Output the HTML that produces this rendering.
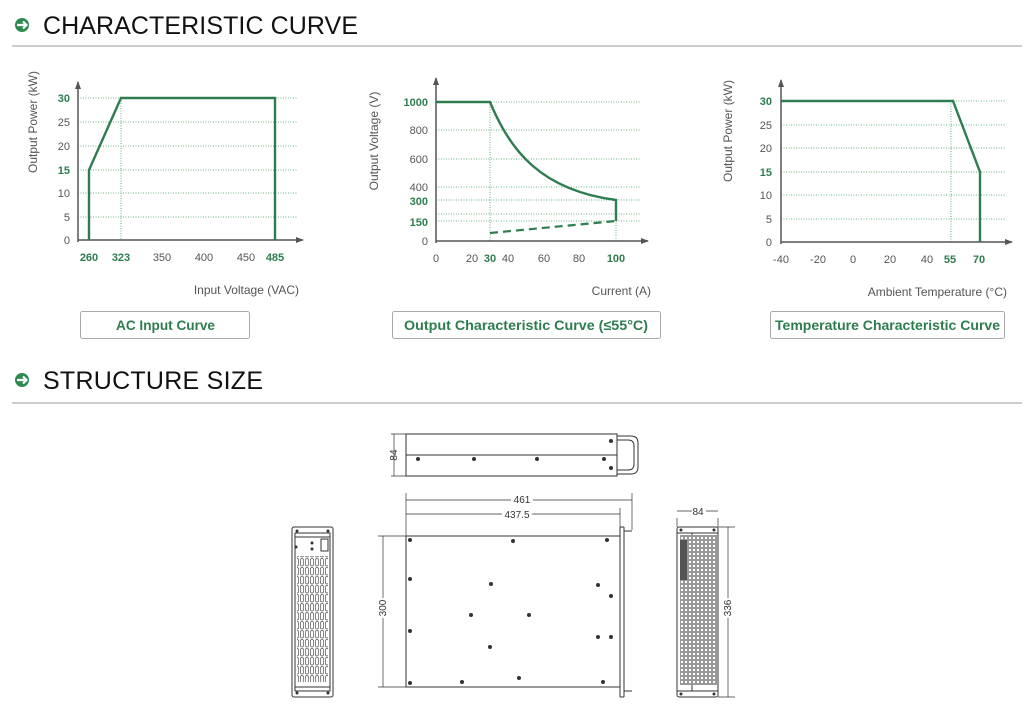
<!DOCTYPE html>
<html><head><meta charset="utf-8"><style>
html,body{margin:0;padding:0;background:#fff;}
svg{display:block;font-family:"Liberation Sans",sans-serif;}
</style></head><body>
<svg width="1031" height="716" viewBox="0 0 1031 716" xmlns="http://www.w3.org/2000/svg">
<defs>
<pattern id="vent" x="0" y="0" width="5" height="9" patternUnits="userSpaceOnUse">
<rect x="0.5" y="0.5" width="3" height="7.5" rx="1.5" fill="none" stroke="#555" stroke-width="0.7"/>
</pattern>
<pattern id="grid" x="0" y="0" width="4" height="4" patternUnits="userSpaceOnUse">
<rect x="0.5" y="0.5" width="3" height="3" fill="none" stroke="#555" stroke-width="0.6"/>
</pattern>
<marker id="ar" markerWidth="8" markerHeight="8" refX="7" refY="4" orient="auto" markerUnits="userSpaceOnUse"><path d="M0,1 L8,4 L0,7 Z" fill="#555"/></marker>
</defs>

<!-- Header 1 -->
<circle cx="22" cy="25" r="7" fill="#2f8a4f"/>
<path d="M17,25 H26 M23,21.5 L26.5,25 L23,28.5" stroke="#fff" stroke-width="2.2" fill="none"/>
<text x="43" y="34" font-size="25" textLength="315" lengthAdjust="spacing" fill="#111">CHARACTERISTIC CURVE</text>
<rect x="12" y="45" width="1010" height="2" fill="#ccc"/>

<!-- Chart 1 -->
<g stroke="#3a9a5a" stroke-width="0.8" stroke-dasharray="1,1.5" fill="none">
<path d="M78,98H297 M78,122H297 M78,146H297 M78,170H297 M78,193H297 M78,217H297 M121,98V240"/>
</g>
<path d="M78,242V82" stroke="#555" stroke-width="1.5" marker-end="url(#ar)"/>
<path d="M78,240H303" stroke="#555" stroke-width="1.5" marker-end="url(#ar)"/>
<path d="M89,240V170L121,98H275V240" stroke="#2e7d4f" stroke-width="2.4" fill="none"/>
<g font-size="11" text-anchor="end" fill="#555">
<text x="70" y="102" fill="#2e7d4f" font-weight="bold">30</text><text x="70" y="126">25</text><text x="70" y="150">20</text>
<text x="70" y="174" fill="#2e7d4f" font-weight="bold">15</text><text x="70" y="197">10</text><text x="70" y="221">5</text><text x="70" y="244">0</text>
</g>
<g font-size="11" text-anchor="middle" fill="#555">
<text x="89" y="261" fill="#2e7d4f" font-weight="bold">260</text><text x="121" y="261" fill="#2e7d4f" font-weight="bold">323</text>
<text x="162" y="261">350</text><text x="204" y="261">400</text><text x="246" y="261">450</text>
<text x="275" y="261" fill="#2e7d4f" font-weight="bold">485</text>
</g>
<text transform="translate(37,122) rotate(-90)" font-size="12" text-anchor="middle" fill="#555">Output Power (kW)</text>
<text x="299" y="294" font-size="12" text-anchor="end" fill="#555">Input Voltage (VAC)</text>
<rect x="80.5" y="311.5" width="169" height="27" rx="2" fill="#fff" stroke="#aaa"/>
<text x="116" y="330" font-size="14" font-weight="bold" textLength="99" lengthAdjust="spacingAndGlyphs" fill="#2e7d4f">AC Input Curve</text>

<!-- Chart 2 -->
<g stroke="#3a9a5a" stroke-width="0.8" stroke-dasharray="1,1.5" fill="none">
<path d="M436,102H640 M436,130H640 M436,159H640 M436,187H640 M436,200H640 M436,214H640 M436,221H640 M490,102V241 M616,200V241"/>
</g>
<path d="M436,243V78" stroke="#555" stroke-width="1.5" marker-end="url(#ar)"/>
<path d="M436,241H648" stroke="#555" stroke-width="1.5" marker-end="url(#ar)"/>
<path d="M436,102H490C510,150 540,190 616,200V221" stroke="#2e7d4f" stroke-width="2.4" fill="none"/>
<path d="M490,233L616,221" stroke="#2e7d4f" stroke-width="2.2" stroke-dasharray="8,5" fill="none"/>
<g font-size="11" text-anchor="end" fill="#555">
<text x="428" y="106" fill="#2e7d4f" font-weight="bold">1000</text><text x="428" y="134">800</text><text x="428" y="163">600</text>
<text x="428" y="191">400</text><text x="428" y="205" fill="#2e7d4f" font-weight="bold">300</text>
<text x="428" y="226" fill="#2e7d4f" font-weight="bold">150</text><text x="428" y="245">0</text>
</g>
<g font-size="11" text-anchor="middle" fill="#555">
<text x="436" y="262">0</text><text x="472" y="262">20</text><text x="490" y="262" fill="#2e7d4f" font-weight="bold">30</text>
<text x="508" y="262">40</text><text x="544" y="262">60</text><text x="579" y="262">80</text>
<text x="616" y="262" fill="#2e7d4f" font-weight="bold">100</text>
</g>
<text transform="translate(378,141) rotate(-90)" font-size="12" text-anchor="middle" fill="#555">Output Voltage (V)</text>
<text x="651" y="295" font-size="12" text-anchor="end" fill="#555">Current (A)</text>
<rect x="392.5" y="311.5" width="268" height="27" rx="2" fill="#fff" stroke="#aaa"/>
<text x="404" y="330" font-size="14" font-weight="bold" textLength="244" lengthAdjust="spacingAndGlyphs" fill="#2e7d4f">Output Characteristic Curve (≤55°C)</text>

<!-- Chart 3 -->
<g stroke="#3a9a5a" stroke-width="0.8" stroke-dasharray="1,1.5" fill="none">
<path d="M781,101H1005 M781,125H1005 M781,148H1005 M781,172H1005 M781,195H1005 M781,219H1005 M951,101V242"/>
</g>
<path d="M781,244V80" stroke="#555" stroke-width="1.5" marker-end="url(#ar)"/>
<path d="M781,242H1012" stroke="#555" stroke-width="1.5" marker-end="url(#ar)"/>
<path d="M781,101H953L980,172V242" stroke="#2e7d4f" stroke-width="2.4" fill="none"/>
<g font-size="11" text-anchor="end" fill="#555">
<text x="772" y="105" fill="#2e7d4f" font-weight="bold">30</text><text x="772" y="129">25</text><text x="772" y="152">20</text>
<text x="772" y="176" fill="#2e7d4f" font-weight="bold">15</text><text x="772" y="199">10</text><text x="772" y="223">5</text><text x="772" y="246">0</text>
</g>
<g font-size="11" text-anchor="middle" fill="#555">
<text x="781" y="263">-40</text><text x="818" y="263">-20</text><text x="853" y="263">0</text><text x="890" y="263">20</text>
<text x="927" y="263">40</text><text x="950" y="263" fill="#2e7d4f" font-weight="bold">55</text>
<text x="979" y="263" fill="#2e7d4f" font-weight="bold">70</text>
</g>
<text transform="translate(732,131) rotate(-90)" font-size="12" text-anchor="middle" fill="#555">Output Power (kW)</text>
<text x="1007" y="296" font-size="12" text-anchor="end" fill="#555">Ambient Temperature (°C)</text>
<rect x="770.5" y="311.5" width="234" height="27" rx="2" fill="#fff" stroke="#aaa"/>
<text x="775" y="330" font-size="14" font-weight="bold" textLength="225" lengthAdjust="spacingAndGlyphs" fill="#2e7d4f">Temperature Characteristic Curve</text>

<!-- Header 2 -->
<circle cx="22" cy="380" r="7" fill="#2f8a4f"/>
<path d="M17,380 H26 M23,376.5 L26.5,380 L23,383.5" stroke="#fff" stroke-width="2.2" fill="none"/>
<text x="43" y="389" font-size="25" textLength="220" lengthAdjust="spacing" fill="#111">STRUCTURE SIZE</text>
<rect x="12" y="402" width="1010" height="2" fill="#ccc"/>

<!-- Drawings -->
<g stroke="#333" stroke-width="1" fill="none">
<rect x="406" y="434" width="211" height="42"/>
<path d="M406,455H617"/>
<path d="M617,436H631Q638,436 638,443V467Q638,474 631,474H617 M617,440H628Q634,440 634,446V464Q634,470 628,470H617"/>
<path d="M391,434H406 M391,476H406 M394,434V476" stroke-width="0.7"/>
<rect x="406" y="536" width="214" height="151"/>
<path d="M620,527V697 M624,527V697 M620,527H624 M620,697H624 M624,531H632 M624,691H632"/>
<path d="M406,493V536 M632,493V530 M620,508V527 M406,500H632 M406,514H620" stroke-width="0.7"/>
<path d="M378,536H406 M378,687H406 M383,536V687" stroke-width="0.7"/>
<rect x="292" y="527" width="41" height="170" rx="2"/>
<rect x="295" y="533" width="35" height="158"/>
<path d="M295,537H330 M295,687H330"/>
<rect x="321" y="539" width="7" height="12"/>
<rect x="677" y="527" width="41" height="170" rx="2"/>
<path d="M677,533H718 M677,691H718 M692,533V691"/>
<path d="M677,518V527 M718,518V527 M677,511H718 M718,527H735 M718,697H735 M728,527V697" stroke-width="0.7"/>
</g>
<rect x="297" y="556" width="31" height="126" fill="url(#vent)"/>
<rect x="680" y="535" width="11" height="150" fill="url(#grid)"/>
<rect x="693" y="535" width="24" height="150" fill="url(#grid)"/>
<rect x="680" y="540" width="7" height="40" fill="#555"/>
<g fill="#333">
<circle cx="418" cy="459" r="2"/><circle cx="474" cy="459" r="2"/><circle cx="537" cy="459" r="2"/><circle cx="604" cy="459" r="2"/>
<circle cx="611" cy="441" r="2"/><circle cx="611" cy="468" r="2"/>
<circle cx="410" cy="540" r="2"/><circle cx="513" cy="541" r="2"/><circle cx="607" cy="540" r="2"/>
<circle cx="410" cy="579" r="2"/><circle cx="491" cy="584" r="2"/><circle cx="598" cy="585" r="2"/><circle cx="611" cy="596" r="2"/>
<circle cx="471" cy="615" r="2"/><circle cx="529" cy="615" r="2"/>
<circle cx="410" cy="631" r="2"/><circle cx="598" cy="637" r="2"/><circle cx="611" cy="637" r="2"/>
<circle cx="490" cy="647" r="2"/>
<circle cx="410" cy="683" r="2"/><circle cx="462" cy="682" r="2"/><circle cx="519" cy="678" r="2"/><circle cx="603" cy="682" r="2"/>
<circle cx="297" cy="531" r="1.5"/><circle cx="328" cy="531" r="1.5"/><circle cx="297" cy="693" r="1.5"/><circle cx="328" cy="693" r="1.5"/>
<circle cx="312" cy="543" r="1.5"/><circle cx="312" cy="549" r="1.5"/><circle cx="296" cy="547" r="1.5"/>
<circle cx="681" cy="530" r="1.5"/><circle cx="714" cy="530" r="1.5"/><circle cx="681" cy="694" r="1.5"/><circle cx="714" cy="694" r="1.5"/>
</g>
<g font-family="Liberation Sans Narrow, Liberation Sans, sans-serif" font-size="10" fill="#333" text-anchor="middle">
<rect x="511" y="494" width="22" height="11" fill="#fff"/><text x="522" y="503">461</text>
<rect x="502" y="508" width="30" height="11" fill="#fff"/><text x="517" y="518">437.5</text>
<rect x="692" y="506" width="14" height="11" fill="#fff"/><text x="698" y="515">84</text>
<text transform="translate(397,455) rotate(-90)">84</text>
<rect x="378" y="598" width="11" height="20" fill="#fff"/>
<text transform="translate(386,608) rotate(-90)">300</text>
<rect x="723" y="598" width="11" height="20" fill="#fff"/>
<text transform="translate(731,608) rotate(-90)">336</text>
</g>
</svg>
</body></html>
